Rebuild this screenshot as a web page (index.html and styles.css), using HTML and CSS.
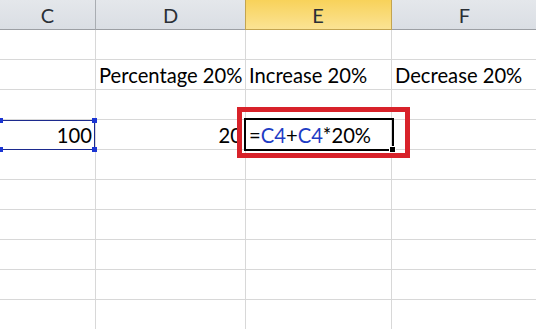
FILE: index.html
```html
<!DOCTYPE html>
<html>
<head>
<meta charset="utf-8">
<link rel="stylesheet" href="styles.css">
</head>
<body>
<div class="sheet">
  <div class="hd">C</div>
  <div class="hd">D</div>
  <div class="hd hd-sel">E</div>
  <div class="hd">F</div>

  <div class="c"></div><div class="c"></div><div class="c"></div><div class="c"></div>

  <div class="c"></div>
  <div class="c">Percentage 20%</div>
  <div class="c">Increase 20%</div>
  <div class="c">Decrease 20%</div>

  <div class="c"></div><div class="c"></div><div class="c"></div><div class="c"></div>

  <div class="c num">100</div>
  <div class="c num">20</div>
  <div class="c formula">=<span class="ref">C4</span>+<span class="ref">C4</span>*20%</div>
  <div class="c"></div>

  <div class="c"></div><div class="c"></div><div class="c"></div><div class="c"></div>
  <div class="c"></div><div class="c"></div><div class="c"></div><div class="c"></div>
  <div class="c"></div><div class="c"></div><div class="c"></div><div class="c"></div>
  <div class="c"></div><div class="c"></div><div class="c"></div><div class="c"></div>
  <div class="c"></div><div class="c"></div><div class="c"></div><div class="c"></div>
  <div class="c"></div><div class="c"></div><div class="c"></div><div class="c"></div>

  <div class="range">
    <span class="h h-tl"></span><span class="h h-tr"></span>
    <span class="h h-bl"></span><span class="h h-br"></span>
  </div>
  <div class="active"><span class="fill"></span></div>
  <div class="mark"></div>
</div>
</body>
</html>
```

FILE: styles.css
```css
html, body {
  margin: 0;
  padding: 0;
  background: #ffffff;
  overflow: hidden;
}

.sheet {
  position: relative;
  display: grid;
  grid-template-columns: 96px 150px 146px 146px;
  grid-auto-rows: 30px;
  font-family: Lato, "Liberation Sans", sans-serif;
  font-size: 20.2px;
  color: #000;
}

.hd {
  box-sizing: border-box;
  display: flex;
  align-items: center;
  justify-content: center;
  background: linear-gradient(#e4e7eb, #dadee4);
  border-right: 1px solid #a9adb2;
  border-bottom: 1px solid #9c9fa4;
  color: #2a2f36;
  font-size: 20px;
  padding-top: 1px;
}

.hd-sel {
  background: linear-gradient(#f8d25a, #fbe394);
  border-bottom-color: #c3a450;
  border-right-color: #c3a450;
  box-shadow: inset 1px 0 0 #c3a450;
  margin-left: -1px;
}

.c {
  box-sizing: border-box;
  border-right: 1px solid #d8d8d8;
  border-bottom: 1px solid #d8d8d8;
  display: flex;
  align-items: flex-end;
  padding: 0 3px 2px 3px;
  line-height: 24px;
  white-space: nowrap;
  overflow: visible;
}

.num {
  justify-content: flex-end;
}

.formula .ref {
  color: #1f3cc4;
}

.range {
  position: absolute;
  left: 0;
  top: 120px;
  width: 94px;
  height: 28px;
  border: 1px solid #1c2a8e;
  border-left: none;
}

.h {
  position: absolute;
  width: 5px;
  height: 5px;
  background: #1b35d3;
}
.h-tl { left: -2px; top: -3px; }
.h-tr { right: -3px; top: -3px; }
.h-bl { left: -2px; bottom: -3px; }
.h-br { right: -3px; bottom: -3px; }

.active {
  position: absolute;
  left: 244px;
  top: 118px;
  width: 146px;
  height: 29px;
  border: 2px solid #000;
}

.fill {
  position: absolute;
  right: -4px;
  bottom: -4px;
  width: 5px;
  height: 5px;
  background: #000;
  border: 1px solid #fff;
}

.mark {
  position: absolute;
  left: 237px;
  top: 107px;
  width: 163px;
  height: 41px;
  border: 5px solid #d8222a;
}
```
